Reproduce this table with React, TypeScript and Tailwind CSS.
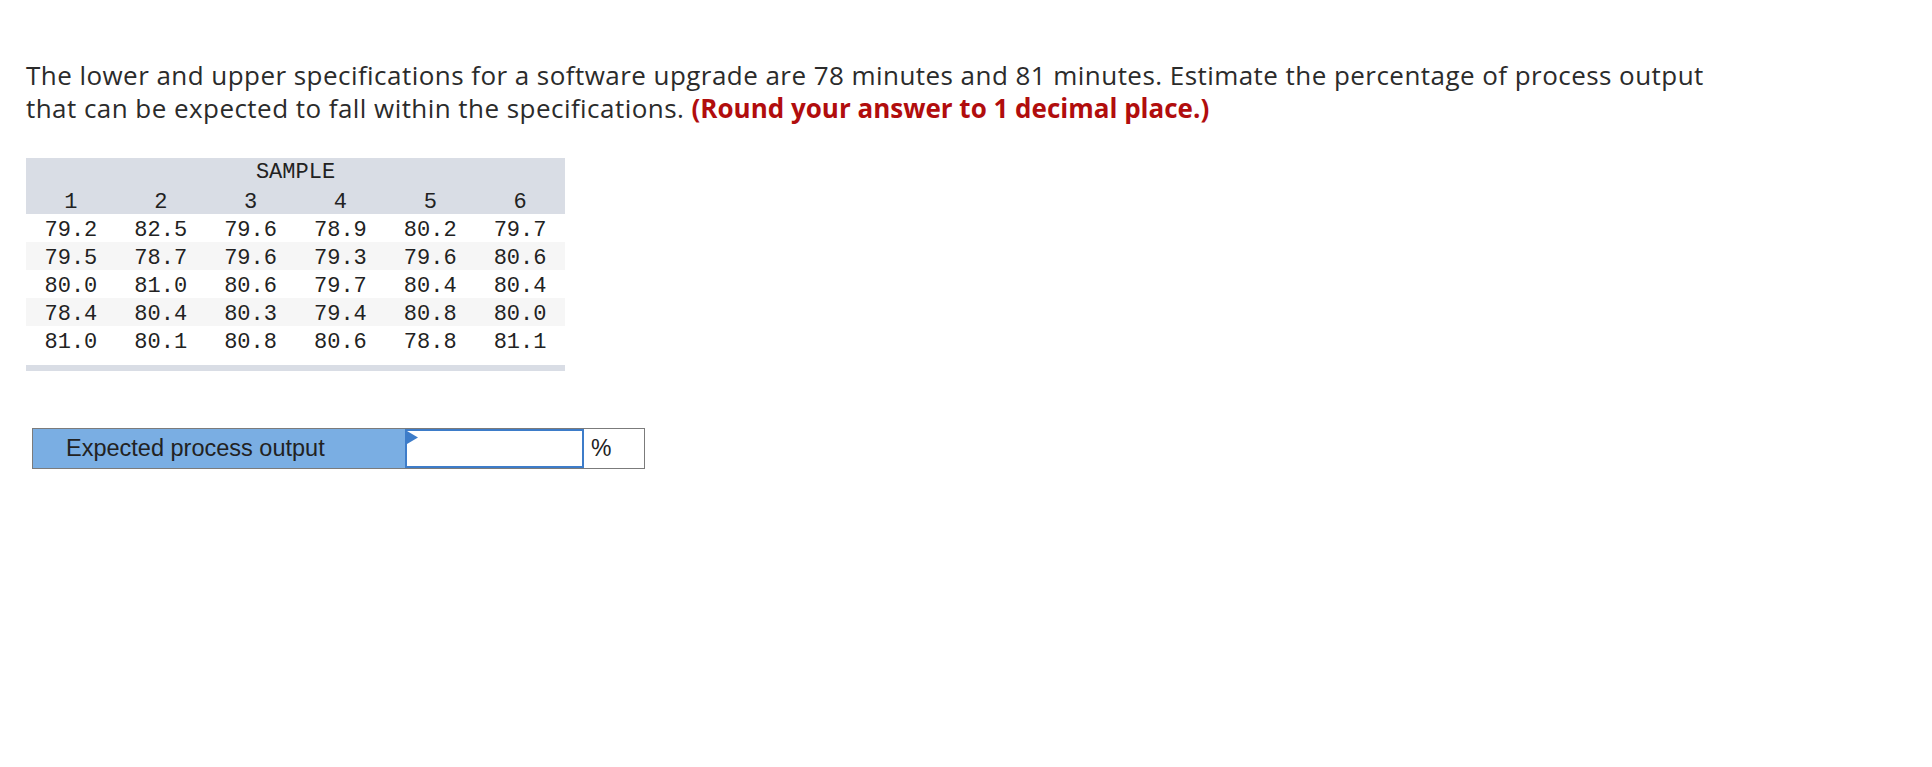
import React from "react";

const rows = [
  ["79.2", "82.5", "79.6", "78.9", "80.2", "79.7"],
  ["79.5", "78.7", "79.6", "79.3", "79.6", "80.6"],
  ["80.0", "81.0", "80.6", "79.7", "80.4", "80.4"],
  ["78.4", "80.4", "80.3", "79.4", "80.8", "80.0"],
  ["81.0", "80.1", "80.8", "80.6", "78.8", "81.1"],
];

export default function App() {
  return (
    <div className="min-h-screen w-full bg-white pl-[26px] pt-[59px]">
      <p className="text-[26px] leading-[33px] tracking-[0.45px] text-[#2b2b2b] font-['Open_Sans',sans-serif] whitespace-nowrap">
        The lower and upper specifications for a software upgrade are 78 minutes and 81 minutes. Estimate the
        percentage of process output
        <br />
        that can be expected to fall within the specifications.{" "}
        <span className="font-bold tracking-normal text-[#b10d0d]">(Round your answer to 1 decimal place.)</span>
      </p>

      {/* sample table */}
      <div className="mt-[33px] w-[539px] font-['Liberation_Mono',monospace] text-[22px] text-[#222]">
        <div className="bg-[#d9dde5]">
          <div className="h-[28px] flex items-center justify-center">SAMPLE</div>
          <div className="grid grid-cols-6 h-[28px] items-center">
            {[1, 2, 3, 4, 5, 6].map((n) => (
              <div key={n} className="text-center">{n}</div>
            ))}
          </div>
        </div>
        {rows.map((r, i) => (
          <div
            key={i}
            className={`grid grid-cols-6 h-[28px] items-center ${i % 2 === 1 ? "bg-[#f6f6f6]" : "bg-white"}`}
          >
            {r.map((v, j) => (
              <div key={j} className="text-center">{v}</div>
            ))}
          </div>
        ))}
        <div className="h-[11px]" />
        <div className="h-[6px] bg-[#d9dde5]" />
      </div>

      {/* answer row */}
      <div className="mt-[57px] ml-[6px] flex h-[41px] w-[613px] border border-[#7b7b7b] font-['Liberation_Sans',Arial,sans-serif]">
        <div className="w-[372px] bg-[#7aaee3] flex items-center pl-[33px] text-[23.5px] text-[#222]">
          Expected process output
        </div>
        <div className="relative w-[179px] border-2 border-[#3d7cc9] bg-white">
          <svg className="absolute left-0 top-0" width="11" height="13" viewBox="0 0 11 13">
            <polygon points="0,0 11,6.5 0,13" fill="#3d7cc9" />
          </svg>
        </div>
        <div className="flex-1 flex items-center pl-[7px] text-[23px] text-[#222]">%</div>
      </div>
    </div>
  );
}
